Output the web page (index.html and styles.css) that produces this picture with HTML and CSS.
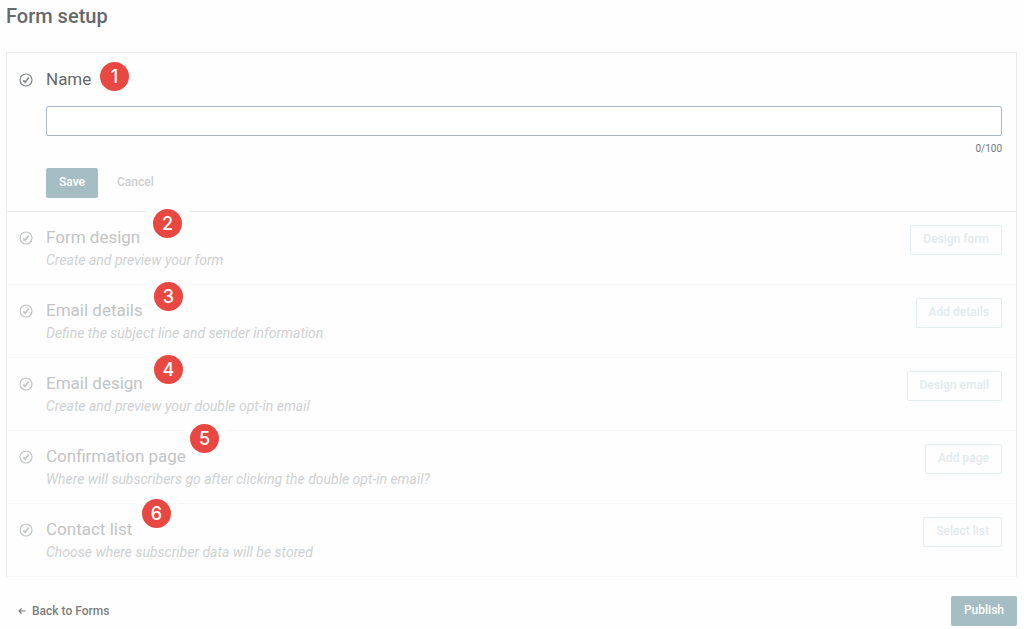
FILE: index.html
```html
<!DOCTYPE html>
<html lang="en">
    <head>
        <meta charset="utf-8">
        <title>Form setup</title>
        <link rel="stylesheet" href="styles.css">
    </head>
    <body>
        <svg class="sprite" aria-hidden="true">
            <symbol id="check" viewBox="0 0 14 14">
                <circle cx="7" cy="7" r="6" fill="none" stroke="currentColor" stroke-width="1.2"/>
                <path d="M4.2 7.3 6.2 9.2 9.8 4.6" fill="none" stroke="currentColor" stroke-width="1.7"/>
            </symbol>
        </svg>

        <h1>Form setup</h1>

        <form class="setup">
            <section class="step active">
                <svg class="check"><use href="#check"/></svg>
                <div class="stepBody">
                    <h2><label for="formName">Name</label></h2>
                    <input class="nameInput" id="formName" type="text" maxlength="100">
                    <p class="counter">0/100</p>
                    <div class="actions">
                        <button class="primary" type="button">Save</button>
                        <button class="plain" type="button">Cancel</button>
                    </div>
                </div>
                <span class="badge badge1"><b>1</b></span>
            </section>

            <section class="step">
                <svg class="check"><use href="#check"/></svg>
                <div class="stepBody">
                    <h2>Form design</h2>
                    <p class="hint">Create and preview your form</p>
                </div>
                <button class="outline" type="button">Design form</button>
                <span class="badge badge2"><b>2</b></span>
            </section>

            <section class="step">
                <svg class="check"><use href="#check"/></svg>
                <div class="stepBody">
                    <h2>Email details</h2>
                    <p class="hint">Define the subject line and sender information</p>
                </div>
                <button class="outline" type="button">Add details</button>
                <span class="badge badge3"><b>3</b></span>
            </section>

            <section class="step">
                <svg class="check"><use href="#check"/></svg>
                <div class="stepBody">
                    <h2>Email design</h2>
                    <p class="hint">Create and preview your double opt-in email</p>
                </div>
                <button class="outline" type="button">Design email</button>
                <span class="badge badge4"><b>4</b></span>
            </section>

            <section class="step">
                <svg class="check"><use href="#check"/></svg>
                <div class="stepBody">
                    <h2>Confirmation page</h2>
                    <p class="hint">Where will subscribers go after clicking the double opt-in email?</p>
                </div>
                <button class="outline" type="button">Add page</button>
                <span class="badge badge5"><b>5</b></span>
            </section>

            <section class="step">
                <svg class="check"><use href="#check"/></svg>
                <div class="stepBody">
                    <h2>Contact list</h2>
                    <p class="hint">Choose where subscriber data will be stored</p>
                </div>
                <button class="outline" type="button">Select list</button>
                <span class="badge badge6"><b>6</b></span>
            </section>
        </form>

        <footer class="bottom">
            <a class="back" href="#">
                <svg class="arrow" viewBox="0 0 8 8"><path d="M7.5 4H1M3.5 1.5 1 4l2.5 2.5" fill="none" stroke="currentColor" stroke-width="1.2"/></svg>
                Back to Forms
            </a>
            <button class="primary" type="button">Publish</button>
        </footer>
    </body>
</html>
```

FILE: styles.css
```css
* {
    box-sizing: border-box;
}
body {
    margin: 0;
    padding: 4px 7px 0 6px;
    background-color: #fefefe;
    color: #66696a;
    font-family: Roboto, Arial, sans-serif;
}
h1, h2, p {
    margin: 0;
}
h1 {
    font-size: 20px;
    line-height: 24px;
    font-weight: 500;
}
h2 {
    font-size: 17px;
    line-height: 24px;
    font-weight: 400;
}
button {
    height: 30px;
    padding: 0 12px 2px;
    border: 1px solid transparent;
    border-radius: 2px;
    background: none;
    font-family: inherit;
    font-size: 12px;
    font-weight: 500;
}
.sprite {
    display: none;
}
.setup {
    margin-top: 24px;
    border: 1px solid #e9ebec;
    border-bottom-color: #f5f6f6;
}
.step {
    position: relative;
    display: flex;
    align-items: flex-start;
    padding: 13px 14px 12px 12px;
    border-top: 1px solid #f5f6f6;
    color: #c2c4c5;
}
.step.active {
    padding-top: 14px;
    padding-bottom: 13px;
    border-top: none;
    color: #66696a;
}
.step.active + .step {
    border-top-color: #e6e8e9;
}
.check {
    flex: none;
    width: 14px;
    height: 14px;
    margin: 6px 13px 0 0;
}
.active .check {
    color: #85888a;
}
.stepBody {
    flex: 1;
    position: relative;
    z-index: 1;
}
.nameInput {
    display: block;
    width: 100%;
    height: 30px;
    margin-top: 15px;
    padding: 0 8px;
    border: 1px solid #aab7c0;
    border-radius: 2px;
    background-color: #fff;
    font: inherit;
}
.counter {
    margin-top: 5px;
    font-size: 10px;
    line-height: 16px;
    text-align: right;
    color: #777;
}
.actions {
    display: flex;
    gap: 6px;
    margin-top: 11px;
}
.primary {
    background-color: #a5bdc3;
    color: #fff;
}
.plain {
    color: #cdcfd0;
}
.hint {
    font-size: 14px;
    line-height: 23px;
    font-style: italic;
    color: #cfd1d2;
}
.outline {
    border-color: #e4edef;
    color: #e2eaec;
}
/* numbered callouts */
.badge {
    position: absolute;
    padding: 4px 7px;
    background-color: #fefefe;
}
.badge b {
    display: block;
    width: 29px;
    height: 29px;
    border-radius: 50%;
    background-color: #e94842;
    color: #fff;
    font: 500 18px/30px Inter, Arial, sans-serif;
    text-align: center;
}
.badge1 {
    left: 86px;
    top: 5px;
}
.badge2 {
    left: 139px;
    top: -7px;
}
.badge3 {
    left: 140px;
    top: -7px;
}
.badge4 {
    left: 140px;
    top: -7px;
}
.badge5 {
    left: 176px;
    top: -11px;
}
.badge6 {
    left: 128px;
    top: -9px;
}
.bottom {
    display: flex;
    align-items: center;
    justify-content: space-between;
    margin-top: 19px;
    padding-left: 12px;
}
.back {
    display: flex;
    align-items: center;
    gap: 6px;
    color: #7b7e7f;
    font-size: 12px;
    font-weight: 500;
    text-decoration: none;
}
.arrow {
    width: 8px;
    height: 8px;
}
```
